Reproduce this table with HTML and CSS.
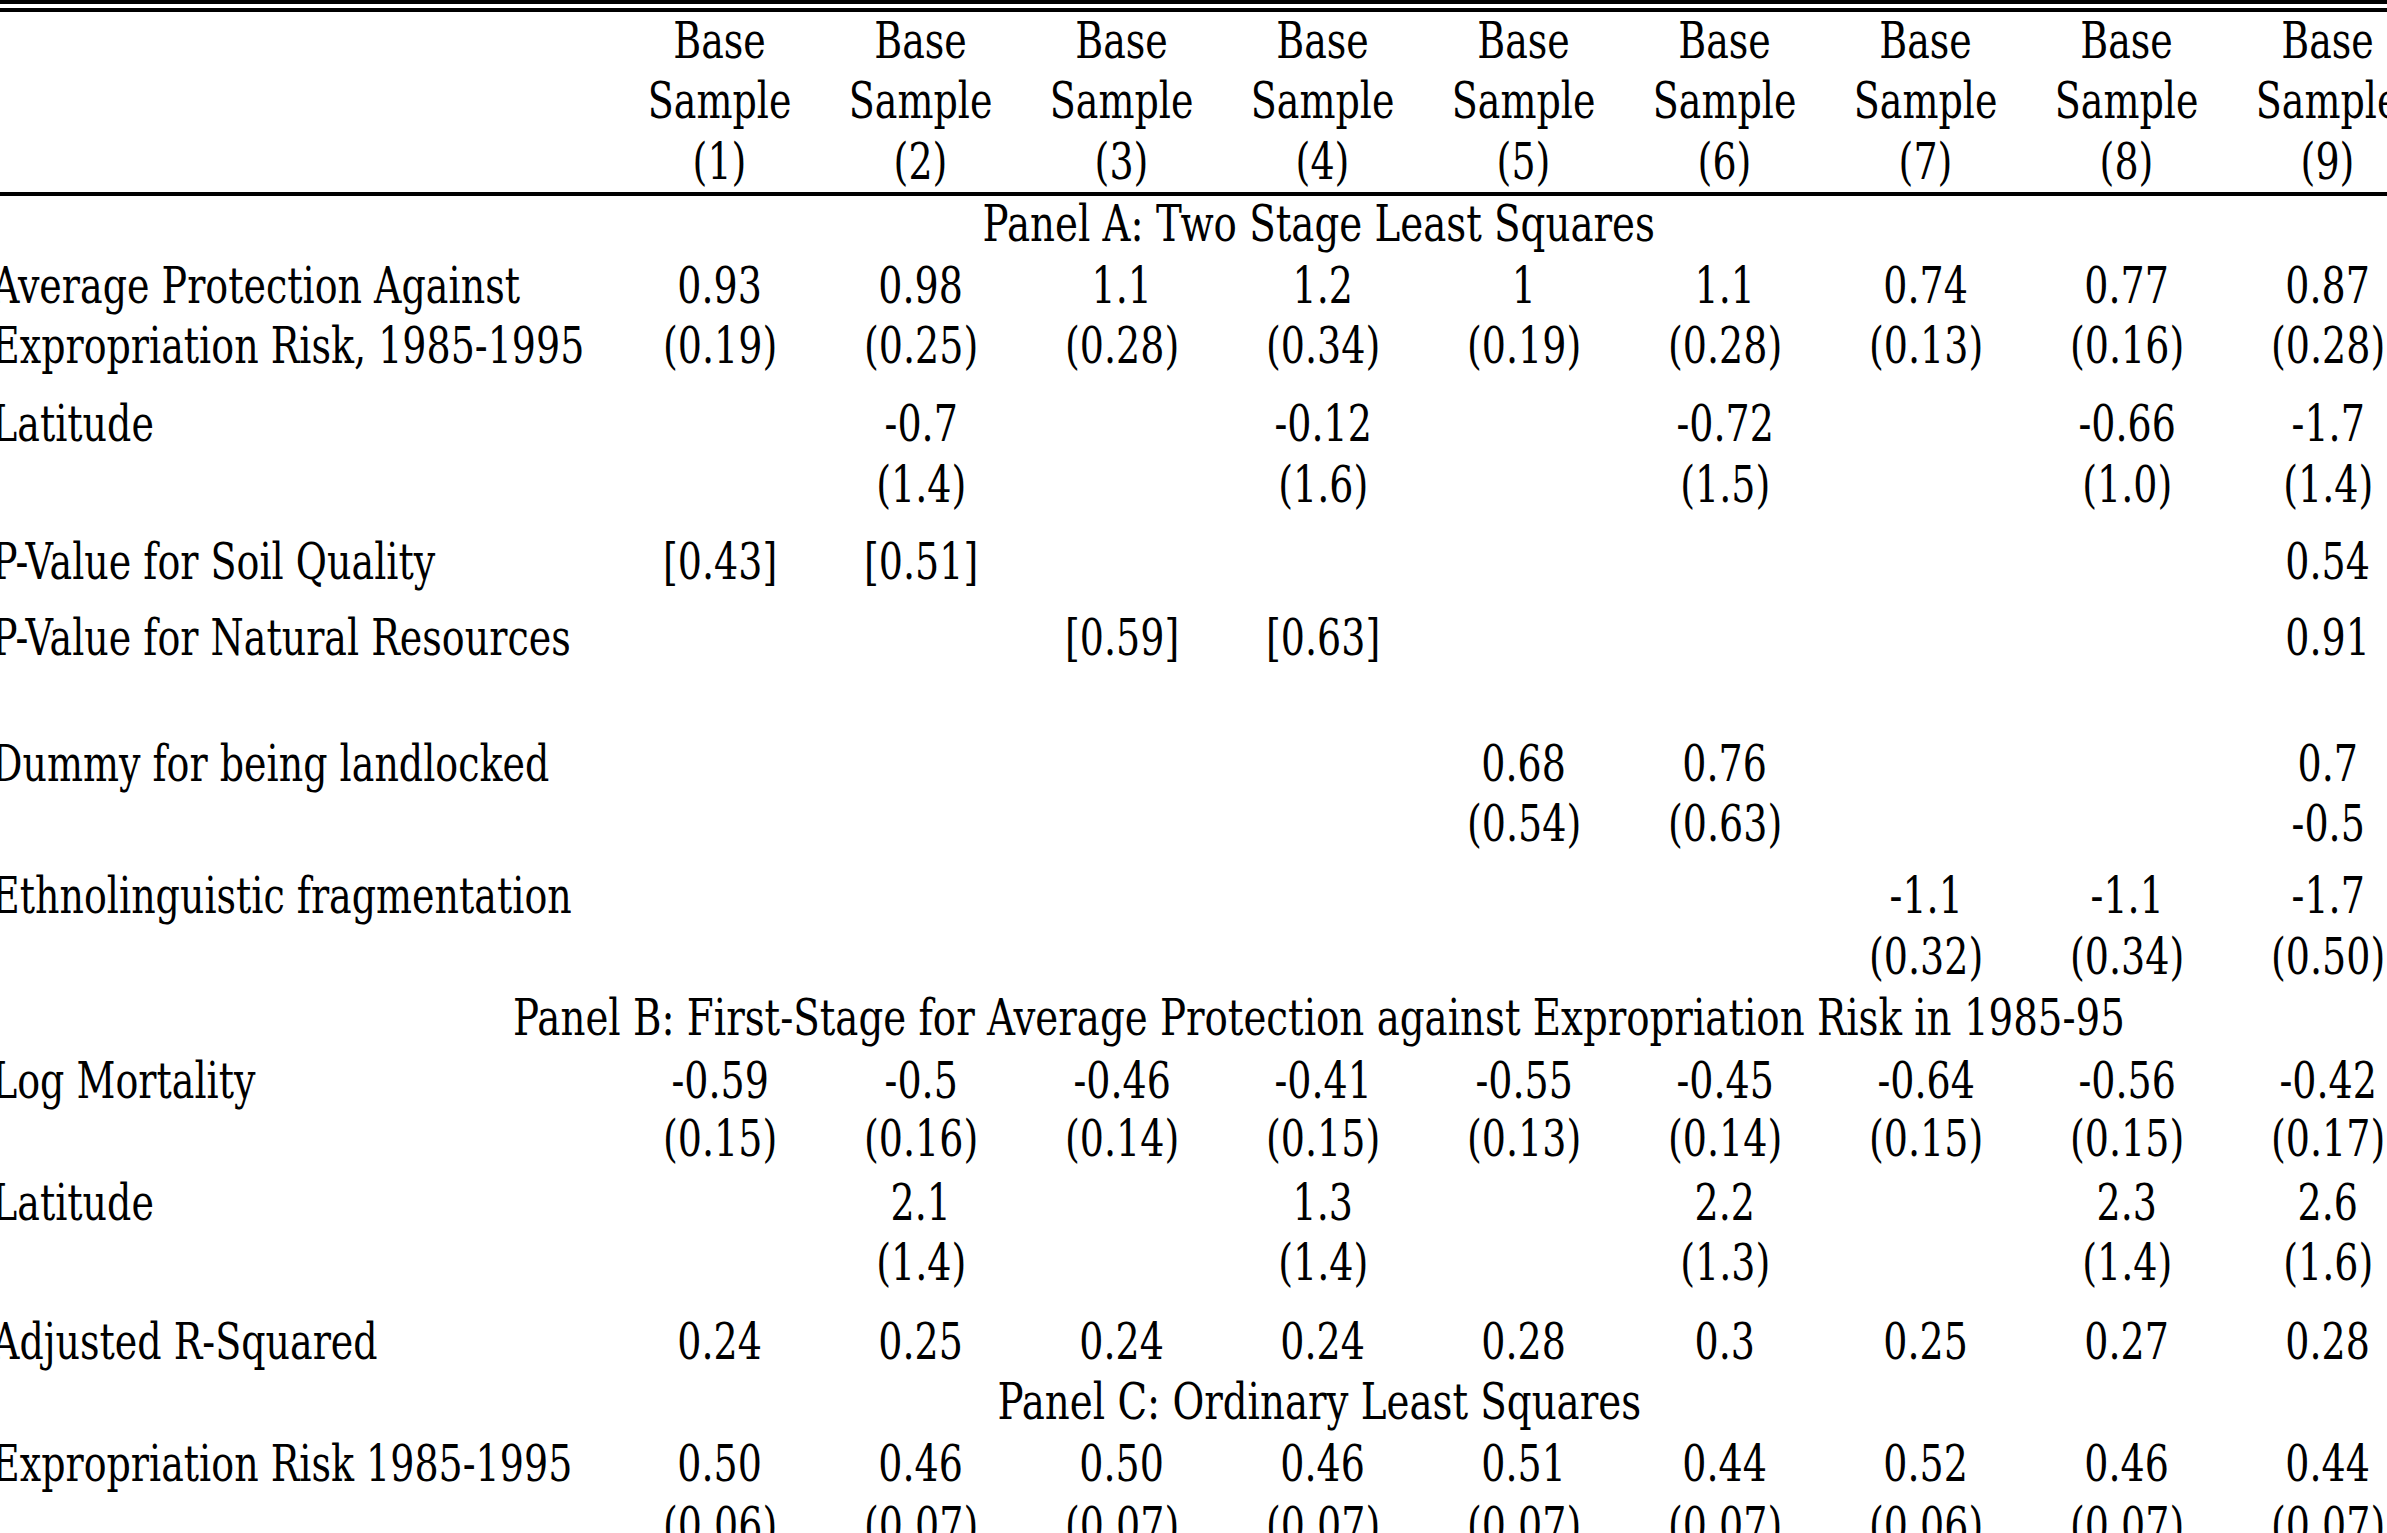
FILE: index.html
```html
<!DOCTYPE html>
<html lang="en">
<head>
<meta charset="utf-8">
<title>Table</title>
<link rel="stylesheet" href="styles.css">
</head>
<body>
<div class="table">
  <div class="rule-top"></div>

  <div class="head"></div>
  <div class="head"><span class="t">Base<br>Sample<br>(1)</span></div>
  <div class="head"><span class="t">Base<br>Sample<br>(2)</span></div>
  <div class="head"><span class="t">Base<br>Sample<br>(3)</span></div>
  <div class="head"><span class="t">Base<br>Sample<br>(4)</span></div>
  <div class="head"><span class="t">Base<br>Sample<br>(5)</span></div>
  <div class="head"><span class="t">Base<br>Sample<br>(6)</span></div>
  <div class="head"><span class="t">Base<br>Sample<br>(7)</span></div>
  <div class="head"><span class="t">Base<br>Sample<br>(8)</span></div>
  <div class="head"><span class="t">Base<br>Sample<br>(9)</span></div>

  <div class="rule"></div>

  <div class="panel"><span class="t">Panel A: Two Stage Least Squares</span></div>

  <div class="c lab"><span class="t">Average Protection Against</span></div>
  <div class="c"><span class="t">0.93</span></div>
  <div class="c"><span class="t">0.98</span></div>
  <div class="c"><span class="t">1.1</span></div>
  <div class="c"><span class="t">1.2</span></div>
  <div class="c"><span class="t">1</span></div>
  <div class="c"><span class="t">1.1</span></div>
  <div class="c"><span class="t">0.74</span></div>
  <div class="c"><span class="t">0.77</span></div>
  <div class="c"><span class="t">0.87</span></div>

  <div class="c lab"><span class="t">Expropriation Risk, 1985-1995</span></div>
  <div class="c"><span class="t">(0.19)</span></div>
  <div class="c"><span class="t">(0.25)</span></div>
  <div class="c"><span class="t">(0.28)</span></div>
  <div class="c"><span class="t">(0.34)</span></div>
  <div class="c"><span class="t">(0.19)</span></div>
  <div class="c"><span class="t">(0.28)</span></div>
  <div class="c"><span class="t">(0.13)</span></div>
  <div class="c"><span class="t">(0.16)</span></div>
  <div class="c"><span class="t">(0.28)</span></div>

  <div class="c lab"><span class="t">Latitude</span></div>
  <div class="c"></div>
  <div class="c"><span class="t">-0.7</span></div>
  <div class="c"></div>
  <div class="c"><span class="t">-0.12</span></div>
  <div class="c"></div>
  <div class="c"><span class="t">-0.72</span></div>
  <div class="c"></div>
  <div class="c"><span class="t">-0.66</span></div>
  <div class="c"><span class="t">-1.7</span></div>

  <div class="c lab"></div>
  <div class="c"></div>
  <div class="c"><span class="t">(1.4)</span></div>
  <div class="c"></div>
  <div class="c"><span class="t">(1.6)</span></div>
  <div class="c"></div>
  <div class="c"><span class="t">(1.5)</span></div>
  <div class="c"></div>
  <div class="c"><span class="t">(1.0)</span></div>
  <div class="c"><span class="t">(1.4)</span></div>

  <div class="c lab"><span class="t">P-Value for Soil Quality</span></div>
  <div class="c"><span class="t">[0.43]</span></div>
  <div class="c"><span class="t">[0.51]</span></div>
  <div class="c"></div>
  <div class="c"></div>
  <div class="c"></div>
  <div class="c"></div>
  <div class="c"></div>
  <div class="c"></div>
  <div class="c"><span class="t">0.54</span></div>

  <div class="c lab"><span class="t">P-Value for Natural Resources</span></div>
  <div class="c"></div>
  <div class="c"></div>
  <div class="c"><span class="t">[0.59]</span></div>
  <div class="c"><span class="t">[0.63]</span></div>
  <div class="c"></div>
  <div class="c"></div>
  <div class="c"></div>
  <div class="c"></div>
  <div class="c"><span class="t">0.91</span></div>

  <div class="c lab"><span class="t">Dummy for being landlocked</span></div>
  <div class="c"></div>
  <div class="c"></div>
  <div class="c"></div>
  <div class="c"></div>
  <div class="c"><span class="t">0.68</span></div>
  <div class="c"><span class="t">0.76</span></div>
  <div class="c"></div>
  <div class="c"></div>
  <div class="c"><span class="t">0.7</span></div>

  <div class="c lab"></div>
  <div class="c"></div>
  <div class="c"></div>
  <div class="c"></div>
  <div class="c"></div>
  <div class="c"><span class="t">(0.54)</span></div>
  <div class="c"><span class="t">(0.63)</span></div>
  <div class="c"></div>
  <div class="c"></div>
  <div class="c"><span class="t">-0.5</span></div>

  <div class="c lab"><span class="t">Ethnolinguistic fragmentation</span></div>
  <div class="c"></div>
  <div class="c"></div>
  <div class="c"></div>
  <div class="c"></div>
  <div class="c"></div>
  <div class="c"></div>
  <div class="c"><span class="t">-1.1</span></div>
  <div class="c"><span class="t">-1.1</span></div>
  <div class="c"><span class="t">-1.7</span></div>

  <div class="c lab"></div>
  <div class="c"></div>
  <div class="c"></div>
  <div class="c"></div>
  <div class="c"></div>
  <div class="c"></div>
  <div class="c"></div>
  <div class="c"><span class="t">(0.32)</span></div>
  <div class="c"><span class="t">(0.34)</span></div>
  <div class="c"><span class="t">(0.50)</span></div>

  <div class="panel"><span class="t">Panel B: First-Stage for Average Protection against Expropriation Risk in 1985-95</span></div>

  <div class="c lab"><span class="t">Log Mortality</span></div>
  <div class="c"><span class="t">-0.59</span></div>
  <div class="c"><span class="t">-0.5</span></div>
  <div class="c"><span class="t">-0.46</span></div>
  <div class="c"><span class="t">-0.41</span></div>
  <div class="c"><span class="t">-0.55</span></div>
  <div class="c"><span class="t">-0.45</span></div>
  <div class="c"><span class="t">-0.64</span></div>
  <div class="c"><span class="t">-0.56</span></div>
  <div class="c"><span class="t">-0.42</span></div>

  <div class="c lab"></div>
  <div class="c"><span class="t">(0.15)</span></div>
  <div class="c"><span class="t">(0.16)</span></div>
  <div class="c"><span class="t">(0.14)</span></div>
  <div class="c"><span class="t">(0.15)</span></div>
  <div class="c"><span class="t">(0.13)</span></div>
  <div class="c"><span class="t">(0.14)</span></div>
  <div class="c"><span class="t">(0.15)</span></div>
  <div class="c"><span class="t">(0.15)</span></div>
  <div class="c"><span class="t">(0.17)</span></div>

  <div class="c lab"><span class="t">Latitude</span></div>
  <div class="c"></div>
  <div class="c"><span class="t">2.1</span></div>
  <div class="c"></div>
  <div class="c"><span class="t">1.3</span></div>
  <div class="c"></div>
  <div class="c"><span class="t">2.2</span></div>
  <div class="c"></div>
  <div class="c"><span class="t">2.3</span></div>
  <div class="c"><span class="t">2.6</span></div>

  <div class="c lab"></div>
  <div class="c"></div>
  <div class="c"><span class="t">(1.4)</span></div>
  <div class="c"></div>
  <div class="c"><span class="t">(1.4)</span></div>
  <div class="c"></div>
  <div class="c"><span class="t">(1.3)</span></div>
  <div class="c"></div>
  <div class="c"><span class="t">(1.4)</span></div>
  <div class="c"><span class="t">(1.6)</span></div>

  <div class="c lab"><span class="t">Adjusted R-Squared</span></div>
  <div class="c"><span class="t">0.24</span></div>
  <div class="c"><span class="t">0.25</span></div>
  <div class="c"><span class="t">0.24</span></div>
  <div class="c"><span class="t">0.24</span></div>
  <div class="c"><span class="t">0.28</span></div>
  <div class="c"><span class="t">0.3</span></div>
  <div class="c"><span class="t">0.25</span></div>
  <div class="c"><span class="t">0.27</span></div>
  <div class="c"><span class="t">0.28</span></div>

  <div class="panel"><span class="t">Panel C: Ordinary Least Squares</span></div>

  <div class="c lab"><span class="t">Expropriation Risk 1985-1995</span></div>
  <div class="c"><span class="t">0.50</span></div>
  <div class="c"><span class="t">0.46</span></div>
  <div class="c"><span class="t">0.50</span></div>
  <div class="c"><span class="t">0.46</span></div>
  <div class="c"><span class="t">0.51</span></div>
  <div class="c"><span class="t">0.44</span></div>
  <div class="c"><span class="t">0.52</span></div>
  <div class="c"><span class="t">0.46</span></div>
  <div class="c"><span class="t">0.44</span></div>

  <div class="c lab"></div>
  <div class="c"><span class="t">(0.06)</span></div>
  <div class="c"><span class="t">(0.07)</span></div>
  <div class="c"><span class="t">(0.07)</span></div>
  <div class="c"><span class="t">(0.07)</span></div>
  <div class="c"><span class="t">(0.07)</span></div>
  <div class="c"><span class="t">(0.07)</span></div>
  <div class="c"><span class="t">(0.06)</span></div>
  <div class="c"><span class="t">(0.07)</span></div>
  <div class="c"><span class="t">(0.07)</span></div>
</div>
</body>
</html>
```
FILE: styles.css
```css
html, body {
  margin: 0;
  padding: 0;
  background: #fff;
  overflow: hidden;
}

body {
  font-family: "DejaVu Serif", serif;
  font-size: 50px;
  color: #000;
}

.table {
  display: grid;
  width: max-content;
  margin-left: -8px;
  grid-template-columns: 627.5px repeat(9, 201px);
  grid-template-rows:
    12px 180px 4px
    57px 62px 60px 78px 61px 77px 76px 126px 60px 72px 61px
    61px 63px 58px 64px 60px 79px
    60px 62px 62px;
}

.rule-top {
  grid-column: 1 / -1;
  border-top: 12px double #000;
}

.rule {
  grid-column: 1 / -1;
  background: #000;
}

.head {
  align-self: end;
  text-align: center;
  line-height: 60.5px;
  white-space: nowrap;
}

.c {
  align-self: end;
  text-align: center;
  line-height: 58px;
  white-space: nowrap;
  min-width: 0;
}

.lab {
  text-align: left;
}

.panel {
  grid-column: 1 / -1;
  align-self: end;
  padding-left: 217px;
  text-align: center;
  line-height: 58px;
  white-space: nowrap;
}

.t {
  display: inline-block;
  transform: scaleX(0.76);
  transform-origin: center;
}

.panel .t {
  transform: scaleX(0.775);
}

.lab .t {
  transform-origin: left center;
}
```
